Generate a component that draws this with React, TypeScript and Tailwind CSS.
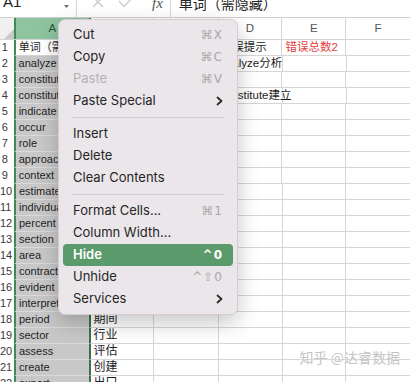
import React from 'react';

type MenuItem =
  | { label: string; shortcut?: string; sub?: boolean; disabled?: boolean; active?: boolean }
  | 'sep';

const menuItems: MenuItem[] = [
  { label: 'Cut', shortcut: '⌘X' },
  { label: 'Copy', shortcut: '⌘C' },
  { label: 'Paste', shortcut: '⌘V', disabled: true },
  { label: 'Paste Special', sub: true },
  'sep',
  { label: 'Insert' },
  { label: 'Delete' },
  { label: 'Clear Contents' },
  'sep',
  { label: 'Format Cells...', shortcut: '⌘1' },
  { label: 'Column Width...' },
  { label: 'Hide', shortcut: '^0', active: true },
  { label: 'Unhide', shortcut: '^⇧0' },
  { label: 'Services', sub: true },
];

// [A, B, D, E] — B/C under the menu are left empty
const rows: [string, string, string, string][] = [
  ['单词（需隐藏）', '', '错误提示', '错误总数2'],
  ['analyze', '', 'analyze分析', ''],
  ['constitute', '', '', ''],
  ['constitute', '', 'constitute建立', ''],
  ['indicate', '', '', ''],
  ['occur', '', '', ''],
  ['role', '', '', ''],
  ['approach', '', '', ''],
  ['context', '', '', ''],
  ['estimate', '', '', ''],
  ['individual', '', '', ''],
  ['percent', '', '', ''],
  ['section', '', '', ''],
  ['area', '', '', ''],
  ['contract', '', '', ''],
  ['evident', '', '', ''],
  ['interpret', '', '', ''],
  ['period', '期间', '', ''],
  ['sector', '行业', '', ''],
  ['assess', '评估', '', ''],
  ['create', '创建', '', ''],
  ['export', '出口', '', ''],
];

function Chevron() {
  return (
    <svg width="7" height="10" viewBox="0 0 7 10" className="ml-auto">
      <polyline
        points="1.5,1.5 5.5,5 1.5,8.5"
        fill="none"
        stroke="#2a2a2a"
        strokeWidth="1.8"
        strokeLinecap="round"
        strokeLinejoin="round"
      />
    </svg>
  );
}

function ContextMenu() {
  return (
    <div className="absolute left-[58px] top-[19px] w-[180px] rounded-[7px] border border-[#d3cdd2] bg-[#ebe6ea] pb-[4px] pt-[4px] font-['Inter','Noto_Sans_CJK_SC',sans-serif] text-[13px] shadow-[0_8px_22px_rgba(0,0,0,0.22)]">
      {menuItems.map((it, i) =>
        it === 'sep' ? (
          <div key={i} className="mx-[13px] flex h-[11px] items-center">
            <div className="h-px w-full bg-[#d4cfd3]" />
          </div>
        ) : (
          <div
            key={i}
            className={
              it.active
                ? 'mx-[4px] flex h-[22px] items-center rounded-[4px] bg-[#5b9a6b] px-[10px] font-semibold text-white'
                : 'mx-[4px] flex h-[22px] items-center rounded-[4px] px-[10px] ' +
                  (it.disabled ? 'text-[#b6b1b5]' : 'text-[#262626]')
            }
          >
            <span>{it.label}</span>
            {it.shortcut && (
              <span
                className={
                  'ml-auto font-["DejaVu_Sans",sans-serif] text-[12px] tracking-[1px] ' +
                  (it.active ? 'text-white' : 'text-[#aaa5a9]')
                }
              >
                {it.shortcut}
              </span>
            )}
            {it.sub && <Chevron />}
          </div>
        )
      )}
    </div>
  );
}

function FormulaBar() {
  return (
    <div className="flex h-[18px] items-start overflow-hidden border-b border-[#cfcfcf] bg-white">
      <div className="flex h-full w-[77px] items-start border-r border-[#d6d6d6]">
        <span className="-mt-[7px] pl-[3px] font-['Liberation_Sans',sans-serif] text-[15px] leading-[18px] text-[#222]">
          A1
        </span>
        <svg width="7" height="12" viewBox="0 0 7 12" className="ml-auto mr-[6px] -mt-[2px]">
          <path d="M1 2 L3.5 -1 L6 2 Z" fill="#9a9a9a" />
          <path d="M1 7 L3.5 10 L6 7 Z" fill="#6f6f6f" />
        </svg>
      </div>
      <svg width="12" height="12" viewBox="0 0 12 12" className="-mt-[4px] ml-[15px]">
        <path d="M1 1 L11 11 M11 1 L1 11" stroke="#cdcdcd" strokeWidth="1.5" />
      </svg>
      <svg width="17" height="12" viewBox="0 0 17 12" className="-mt-[4px] ml-[14px]">
        <path d="M1 5 L6 10.5 L16 0" fill="none" stroke="#cdcdcd" strokeWidth="1.5" />
      </svg>
      <span className="-mt-[6px] ml-[17px] font-['Liberation_Serif',serif] text-[15px] italic leading-[18px] text-[#555]">
        fx
      </span>
      <div className="ml-[7px] h-full w-px bg-[#d6d6d6]" />
      <span className="-mt-[6px] ml-[8px] font-['Noto_Sans_CJK_SC',sans-serif] text-[14px] leading-[18px] text-[#222]">
        单词（需隐藏）
      </span>
    </div>
  );
}

function HeaderRow() {
  return (
    <div className="flex h-[22px] border-b border-[#d4d4d4] bg-white font-['Liberation_Sans',sans-serif] text-[11.5px] text-[#555]">
      <div className="flex w-[14px] items-end justify-end bg-[#f0f0f0]">
        <svg width="10" height="10" viewBox="0 0 10 10">
          <path d="M10 0 L10 10 L0 10 Z" fill="#c9c9c9" />
        </svg>
      </div>
      <div className="flex w-[78px] items-center justify-center border-l-2 border-[#3f8a58] bg-[#8fc4a0] text-[#24573a]">
        A
      </div>
      <div className="w-[67px] border-l-2 border-r border-l-[#3f6e50] border-r-[#d6d6d6]" />
      <div className="w-[67px] border-r border-[#d6d6d6]" />
      <div className="flex w-[66px] items-center justify-center border-r border-[#d6d6d6]">D</div>
      <div className="flex w-[66px] items-center justify-center border-r border-[#d6d6d6]">E</div>
      <div className="flex w-[66px] items-center justify-center">F</div>
    </div>
  );
}

function Row({ n, cells }: { n: number; cells: [string, string, string, string] }) {
  const [a, b, d, e] = cells;
  return (
    <div className="flex h-4 font-['Liberation_Sans','Noto_Sans_CJK_SC',sans-serif] text-[11px] leading-[15px] text-[#1e1e1e]">
      <div className="w-[14px] pr-[4px] text-center text-[11px] text-[#3a3a3a]">{n}</div>
      <div
        className={
          'w-[78px] overflow-hidden whitespace-nowrap border-b border-l-2 border-l-[#3f8a58] pl-[3px] ' +
          (n === 1 ? 'border-b-[#d4d4d4] bg-white' : 'border-b-[#dadada] bg-[#c8c8c8]')
        }
      >
        {a}
      </div>
      <div className="w-[67px] whitespace-nowrap border-b border-l-2 border-r border-b-[#d6d6d6] border-l-[#3f6e50] border-r-[#d6d6d6] pl-[2px] text-[12px]">
        {b}
      </div>
      <div className="w-[67px] border-b border-r border-[#d6d6d6]" />
      <div className="w-[66px] whitespace-nowrap border-b border-r border-[#d6d6d6] pl-[2px] text-[11.5px]">{d}</div>
      <div className="w-[66px] whitespace-nowrap border-b border-r border-[#d6d6d6] pl-[3px] text-[11.5px] text-[#e23b3b]">{e}</div>
      <div className="w-[66px] border-b border-[#d6d6d6]" />
    </div>
  );
}

export default function App() {
  return (
    <div className="relative h-[382px] w-[410px] overflow-hidden bg-white">
      <FormulaBar />
      <HeaderRow />
      {rows.map((r, i) => (
        <Row key={i} n={i + 1} cells={r} />
      ))}
      <ContextMenu />
      <div className="absolute bottom-[14px] right-[10px] font-['Noto_Sans_CJK_SC',sans-serif] text-[14px] text-[#c4c4c4] [text-shadow:0_0_1px_#fff]">
        知乎 @达睿数据
      </div>
    </div>
  );
}
